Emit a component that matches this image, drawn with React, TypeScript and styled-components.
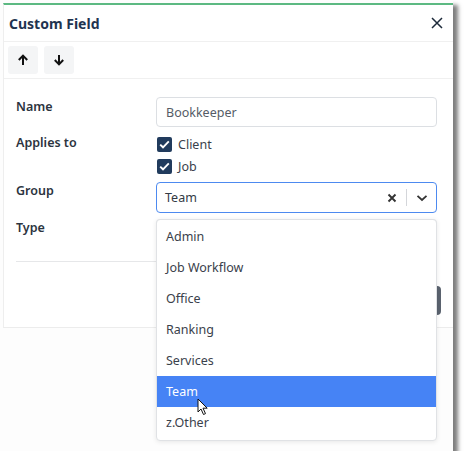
import styled, { createGlobalStyle } from "styled-components";

const GlobalStyle = createGlobalStyle`
  html, body {
    margin: 0;
    background: #ffffff;
  }
  body {
    font-family: "Noto Sans", "Open Sans", sans-serif;
    font-size: 12px;
    color: #333a44;
  }
`;

const Frame = styled.div`
  width: 453px;
  height: 451px;
  background: #fdfdfd;
  padding: 3px 0 0 3px;
  box-sizing: border-box;
  box-shadow: 5px 5px 4px rgba(0, 0, 0, 0.5);
`;

const Dialog = styled.div`
  height: 325px;
  background: #fff;
  border-top: 2px solid #5cb982;
  border-left: 1px solid #eeeeee;
  border-bottom: 1px solid #ececec;
  box-sizing: border-box;
  display: flex;
  flex-direction: column;
`;

const Header = styled.div`
  height: 37px;
  display: flex;
  align-items: center;
  justify-content: space-between;
  padding: 0 9px 0 5px;
  border-bottom: 1px solid #f0f0f0;
  box-sizing: border-box;
`;

const Title = styled.h1`
  margin: 0;
  font-size: 14px;
  font-weight: 700;
  color: #1f3450;
`;

const CloseButton = styled.button`
  border: 0;
  background: none;
  padding: 0;
  width: 14px;
  height: 14px;
  display: flex;
  align-items: center;
  justify-content: center;
`;

const Toolbar = styled.div`
  height: 37px;
  display: flex;
  align-items: center;
  gap: 6px;
  padding: 0 4px;
  border-bottom: 1px solid #f0f0f0;
  box-sizing: border-box;
`;

const ToolButton = styled.button`
  width: 30px;
  height: 28px;
  border: 0;
  border-radius: 3px;
  background: #f4f5f6;
  display: flex;
  align-items: center;
  justify-content: center;
  padding: 0;
`;

const Form = styled.div`
  padding: 18px 16px 0 12px;
  display: flex;
  flex-direction: column;
`;

const Row = styled.div<{ $gap?: number }>`
  display: grid;
  grid-template-columns: 140px 1fr;
  margin-bottom: ${(p) => p.$gap ?? 0}px;
`;

const Label = styled.label<{ $top?: number }>`
  padding-top: ${(p) => p.$top ?? 0}px;
  font-weight: 600;
  font-size: 12.5px;
  color: #2c3440;
  line-height: 18px;
`;

const TextInput = styled.div`
  height: 30px;
  border: 1px solid #dcdfe3;
  border-radius: 4px;
  box-sizing: border-box;
  display: flex;
  align-items: center;
  padding-left: 9px;
  color: #555c66;
  font-size: 12.5px;
`;

const CheckList = styled.div`
  display: flex;
  flex-direction: column;
`;

const CheckRow = styled.div`
  height: 22px;
  display: flex;
  align-items: center;
  gap: 6px;
  color: #3a414b;
  font-size: 12.5px;
`;

const Box = styled.span`
  width: 15px;
  height: 15px;
  border-radius: 2px;
  background: #213b5d;
  display: flex;
  align-items: center;
  justify-content: center;
  margin-left: 1px;
`;

const SelectWrap = styled.div`
  position: relative;
`;

const SelectControl = styled.div<{ $focused?: boolean }>`
  height: 31px;
  border: 1px solid ${(p) => (p.$focused ? "#4d8af0" : "#dcdfe3")};
  border-radius: 4px;
  box-sizing: border-box;
  display: flex;
  align-items: center;
  padding-left: 8px;
  color: #333a44;
  font-size: 12.5px;
`;

const SelectValue = styled.span`
  flex: 1;
`;

const Indicator = styled.span`
  width: 29px;
  height: 100%;
  display: flex;
  align-items: center;
  justify-content: center;
`;

const Separator = styled.span`
  width: 1px;
  height: 17px;
  background: #d4d6da;
`;

const Menu = styled.ul`
  position: absolute;
  top: 37px;
  left: 0;
  right: 0;
  margin: 0;
  padding: 1px 0 2px;
  list-style: none;
  background: #fff;
  border: 1px solid #e0e2e5;
  border-radius: 4px;
  box-shadow: 0 1px 5px rgba(0, 0, 0, 0.09);
  z-index: 2;
`;

const Option = styled.li<{ $active?: boolean }>`
  height: 31px;
  display: flex;
  align-items: center;
  padding-left: 9px;
  font-size: 12.5px;
  color: ${(p) => (p.$active ? "#fff" : "#3a414b")};
  background: ${(p) => (p.$active ? "#4683f5" : "transparent")};
  position: relative;
`;

const Pointer = styled.svg`
  position: absolute;
  left: 40px;
  top: 22px;
`;

const FooterSection = styled.div`
  padding: 11px 12px 0 12px;
`;

const Divider = styled.hr`
  border: 0;
  border-top: 1px solid #e6e7e9;
  margin: 0 4px 0 0;
`;

const Footer = styled.div`
  display: flex;
  justify-content: flex-end;
  padding-top: 24px;
`;

const SaveButton = styled.button`
  height: 29px;
  padding: 0 16px;
  border: 0;
  border-radius: 4px;
  background: #5b636f;
  color: #fff;
  font-family: inherit;
  font-size: 12.5px;
`;

const groups = ["Admin", "Job Workflow", "Office", "Ranking", "Services", "Team", "z.Other"];

const Check = () => (
  <svg width="11" height="9" viewBox="0 0 11 9">
    <path d="M1.2 4.6 L4 7.3 L9.8 1.4" fill="none" stroke="#fff" strokeWidth="1.9" />
  </svg>
);

export default function App() {
  return (
    <>
      <GlobalStyle />
      <Frame>
        <Dialog>
          <Header>
            <Title>Custom Field</Title>
            <CloseButton>
              <svg width="12" height="12" viewBox="0 0 12 12">
                <path d="M1 1 L11 11 M11 1 L1 11" stroke="#1d2a3a" strokeWidth="1.5" />
              </svg>
            </CloseButton>
          </Header>
          <Toolbar>
            <ToolButton>
              <svg width="12" height="12" viewBox="0 0 12 12">
                <path d="M6 11 V1.8 M1.8 6 L6 1.6 L10.2 6" fill="none" stroke="#111" strokeWidth="2" />
              </svg>
            </ToolButton>
            <ToolButton>
              <svg width="12" height="12" viewBox="0 0 12 12">
                <path d="M6 1 V10.2 M1.8 6 L6 10.4 L10.2 6" fill="none" stroke="#111" strokeWidth="2" />
              </svg>
            </ToolButton>
          </Toolbar>
          <Form>
            <Row $gap={6}>
              <Label $top={1}>Name</Label>
              <TextInput>Bookkeeper</TextInput>
            </Row>
            <Row $gap={5}>
              <Label $top={1}>Applies to</Label>
              <CheckList>
                <CheckRow>
                  <Box>
                    <Check />
                  </Box>
                  Client
                </CheckRow>
                <CheckRow>
                  <Box>
                    <Check />
                  </Box>
                  Job
                </CheckRow>
              </CheckList>
            </Row>
            <Row $gap={6}>
              <Label $top={0}>Group</Label>
              <SelectWrap>
                <SelectControl $focused>
                  <SelectValue>Team</SelectValue>
                  <Indicator>
                    <svg width="10" height="10" viewBox="0 0 10 10">
                      <path d="M1.5 1.5 L8.5 8.5 M8.5 1.5 L1.5 8.5" stroke="#333" strokeWidth="1.9" />
                    </svg>
                  </Indicator>
                  <Separator />
                  <Indicator>
                    <svg width="12" height="8" viewBox="0 0 12 8">
                      <path d="M1.5 1.8 L6 6 L10.5 1.8" fill="none" stroke="#333" strokeWidth="1.8" />
                    </svg>
                  </Indicator>
                </SelectControl>
                <Menu>
                  {groups.map((g) => (
                    <Option key={g} $active={g === "Team"}>
                      {g}
                      {g === "Team" && (
                        <Pointer width="12" height="18" viewBox="0 0 12 18">
                          <path
                            d="M1 1 V14 L4 11 L6.5 16.5 L8.5 15.6 L6 10.2 H10.2 Z"
                            fill="#fff"
                            stroke="#111"
                            strokeWidth="1"
                            strokeLinejoin="round"
                          />
                        </Pointer>
                      )}
                    </Option>
                  ))}
                </Menu>
              </SelectWrap>
            </Row>
            <Row>
              <Label $top={0}>Type</Label>
              <SelectControl />
            </Row>
          </Form>
          <FooterSection>
            <Divider />
            <Footer>
              <SaveButton>Save</SaveButton>
            </Footer>
          </FooterSection>
        </Dialog>
      </Frame>
    </>
  );
}
